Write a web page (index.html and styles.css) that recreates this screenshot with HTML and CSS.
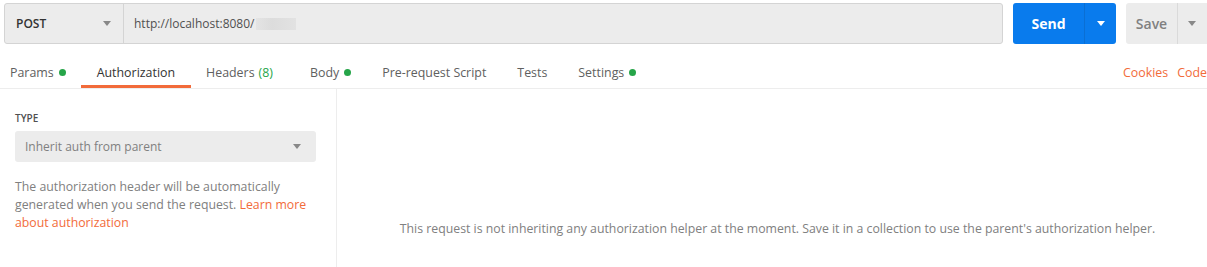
FILE: index.html
```html
<!DOCTYPE html>
<html lang="en">
<head>
    <meta charset="UTF-8">
    <title>Request - Authorization</title>
    <link rel="stylesheet" href="styles.css">
</head>
<body>
    <div class="url-bar">
        <div class="url-box">
            <div class="method">
                <span>POST</span>
                <span class="caret"></span>
            </div>
            <div class="url">http://localhost:8080/<span class="blur"></span></div>
        </div>
        <div class="send-btn">
            <span class="send-label">Send</span>
            <span class="send-drop"><span class="caret white"></span></span>
        </div>
        <div class="save-btn">
            <span class="save-label">Save</span>
            <span class="save-drop"><span class="caret"></span></span>
        </div>
    </div>

    <div class="tabs">
        <div class="tab-list">
            <div class="tab">Params <span class="dot"></span></div>
            <div class="tab active">Authorization</div>
            <div class="tab headers">Headers <span class="count">(8)</span></div>
            <div class="tab">Body <span class="dot"></span></div>
            <div class="tab">Pre-request Script</div>
            <div class="tab">Tests</div>
            <div class="tab">Settings <span class="dot"></span></div>
        </div>
        <div class="tab-links">
            <span>Cookies</span>
            <span>Code</span>
        </div>
    </div>

    <div class="auth">
        <div class="auth-left">
            <div class="type-label">TYPE</div>
            <div class="type-select">
                <span>Inherit auth from parent</span>
                <span class="caret"></span>
            </div>
            <p class="auth-help">The authorization header will be automatically generated when you send the request. <a class="link">Learn more about authorization</a></p>
        </div>
        <div class="auth-right">
            <p>This request is not inheriting any authorization helper at the moment. Save it in a collection to use the parent's authorization helper.</p>
        </div>
    </div>
</body>
</html>
```

FILE: styles.css
```css
body {
    margin: 0;
    font-family: 'Open Sans', sans-serif;
    color: #505050;
    background-color: #fff;
    overflow: hidden;
    width: 1207px;
    height: 267px;
}
.url-bar {
    display: flex;
    align-items: center;
    padding: 3px 0 0 4px;
    height: 41px;
    width: 1240px;
}
.url-box {
    display: flex;
    width: 999px;
    height: 41px;
    border: 1px solid #d4d4d4;
    border-radius: 3px;
    background-color: #ececec;
    box-sizing: border-box;
}
.method {
    display: flex;
    align-items: center;
    justify-content: space-between;
    width: 119px;
    padding: 0 12px 0 11px;
    box-sizing: border-box;
    border-right: 1px solid #d4d4d4;
    font-size: 12px;
    font-weight: 600;
    color: #333;
}
.url {
    display: flex;
    align-items: center;
    padding-left: 10px;
    font-size: 12px;
    color: #505050;
}
.blur {
    display: inline-block;
    width: 40px;
    height: 12px;
    margin-left: 2px;
    background: linear-gradient(90deg, #e4e4e4, #dcdcdc 40%, #e2e2e2);
}
.caret {
    width: 0;
    height: 0;
    border-left: 4px solid transparent;
    border-right: 4px solid transparent;
    border-top: 5px solid #888;
}
.caret.white {
    border-top-color: #fff;
}
.send-btn {
    display: flex;
    margin-left: 10px;
    width: 103px;
    height: 41px;
    border-radius: 3px;
    background-color: #097bed;
    color: #fff;
    font-size: 14px;
    font-weight: 700;
}
.send-label {
    display: flex;
    align-items: center;
    justify-content: center;
    width: 71px;
    border-right: 1px solid #0a6fd4;
}
.send-drop {
    display: flex;
    align-items: center;
    justify-content: center;
    flex: 1;
}
.save-btn {
    display: flex;
    margin-left: 10px;
    width: 90px;
    height: 41px;
    border-radius: 3px;
    background-color: #ececec;
    color: #808080;
    font-size: 14px;
    font-weight: 600;
}
.save-label {
    display: flex;
    align-items: center;
    justify-content: center;
    width: 51px;
    border-right: 1px solid #dadada;
}
.save-drop {
    display: flex;
    align-items: center;
    padding-left: 10px;
}
.tabs {
    display: flex;
    justify-content: space-between;
    height: 45px;
    border-bottom: 1px solid #ededed;
    box-sizing: border-box;
}
.tab-list {
    display: flex;
    padding-left: 10px;
}
.tab {
    display: flex;
    align-items: center;
    padding-top: 15px;
    margin-right: 31px;
    font-size: 12.4px;
    color: #606060;
    border-bottom: 3px solid transparent;
    box-sizing: border-box;
}
.tab.active {
    color: #333;
    border-bottom-color: #f26b3a;
    padding: 15px 16px 0;
    margin-left: -16px;
    margin-right: 15px;
}
.tab.headers {
    margin-right: 37px;
}
.dot {
    display: inline-block;
    width: 7px;
    height: 7px;
    border-radius: 50%;
    background-color: #26a549;
    margin-left: 5px;
}
.count {
    color: #26a549;
    margin-left: 4px;
}
.tab-links {
    display: flex;
    align-items: center;
    padding-top: 15px;
    padding-bottom: 3px;
    gap: 9px;
    font-size: 12.4px;
    color: #f26b3a;
}
.auth {
    display: flex;
    height: 178px;
}
.auth-left {
    width: 337px;
    padding: 22px 20px 0 15px;
    box-sizing: border-box;
    border-right: 1px solid #ededed;
}
.type-label {
    font-size: 10px;
    font-weight: 600;
    color: #505050;
    margin-bottom: 6px;
}
.type-select {
    display: flex;
    align-items: center;
    justify-content: space-between;
    height: 31px;
    padding: 0 15px 0 10px;
    border-radius: 3px;
    background-color: #ececec;
    font-size: 12px;
    color: #808080;
}
.auth-help {
    margin: 16px 0 0;
    font-size: 12.3px;
    line-height: 18px;
    color: #808080;
}
.link {
    color: #f26b3a;
}
.auth-right {
    flex: 1;
    display: flex;
    justify-content: center;
    padding: 131px 0 0 11px;
    box-sizing: border-box;
}
.auth-right p {
    margin: 0;
    font-size: 12.3px;
    line-height: 18px;
    color: #808080;
}
```
